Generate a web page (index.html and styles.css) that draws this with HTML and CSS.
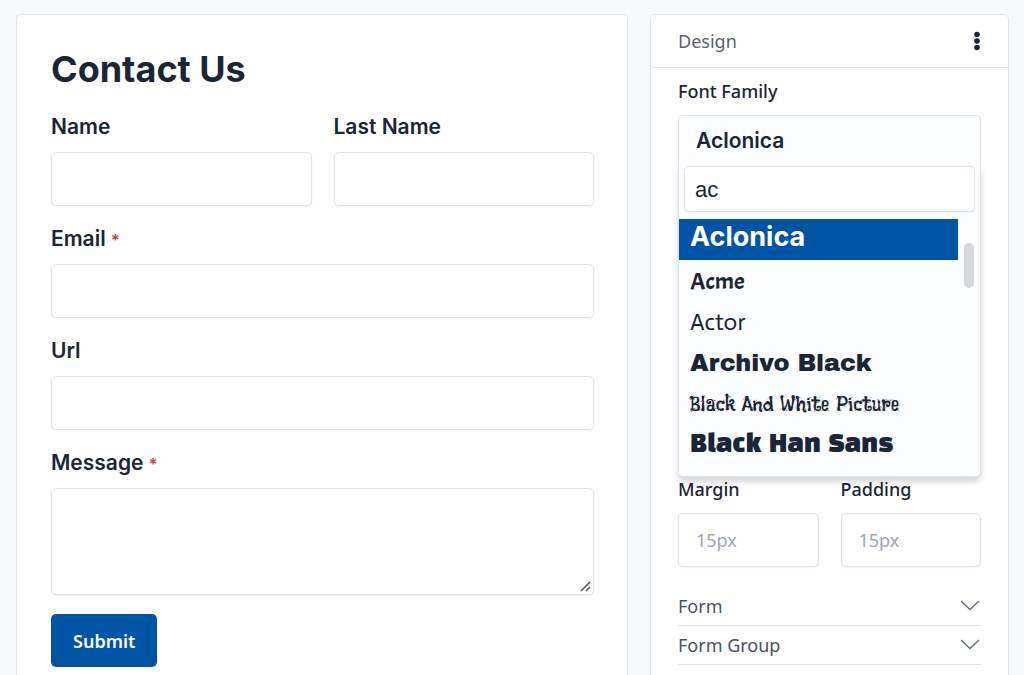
FILE: index.html
```
<!DOCTYPE html>
<html lang="en">
<head>
  <meta charset="UTF-8">
  <meta name="viewport" content="width=device-width, initial-scale=1.0">
  <title>Form Designer</title>
  <link rel="stylesheet" href="styles.css">
</head>

<body>

  <main class="layout">

    <!-- Form preview -->
    <form class="card preview">
      <h1 class="preview-title">Contact Us</h1>

      <div class="row">
        <div class="field">
          <label for="name">Name</label>
          <input type="text" id="name">
        </div>
        <div class="field">
          <label for="lastname">Last Name</label>
          <input type="text" id="lastname">
        </div>
      </div>

      <div class="field">
        <label for="email">Email <span class="required">*</span></label>
        <input type="email" id="email">
      </div>

      <div class="field">
        <label for="url">Url</label>
        <input type="url" id="url">
      </div>

      <div class="field">
        <label for="message">Message <span class="required">*</span></label>
        <textarea id="message"></textarea>
      </div>

      <button type="submit" class="submit">Submit</button>
    </form>

    <!-- Design panel -->
    <aside class="card panel">
      <header class="panel-header">
        <h2>Design</h2>
        <button type="button" class="menu" aria-label="Options">
          <svg width="8" height="20" viewBox="0 0 8 20" fill="#1a2536">
            <circle cx="4" cy="3.5" r="2.8"/>
            <circle cx="4" cy="10" r="2.8"/>
            <circle cx="4" cy="16.5" r="2.8"/>
          </svg>
        </button>
      </header>

      <div class="panel-body">
        <label for="font">Font Family</label>
        <div class="picker">
          <select id="font" class="picker-current">
            <option>Aclonica</option>
          </select>
          <div class="dropdown">
            <input type="text" class="search" value="ac" aria-label="Search fonts">
            <div class="fonts">
              <ul class="font-list">
                <li><button type="button" class="font aclonica selected">Aclonica</button></li>
                <li><button type="button" class="font acme">Acme</button></li>
                <li><button type="button" class="font actor">Actor</button></li>
                <li><button type="button" class="font archivo">Archivo Black</button></li>
                <li><button type="button" class="font picture">Black And White Picture</button></li>
                <li><button type="button" class="font han">Black Han Sans</button></li>
              </ul>
              <div class="scrollbar"></div>
            </div>
          </div>
        </div>

        <div class="row spacing">
          <div>
            <label for="margin">Margin</label>
            <input type="text" id="margin" placeholder="15px">
          </div>
          <div>
            <label for="padding">Padding</label>
            <input type="text" id="padding" placeholder="15px">
          </div>
        </div>

        <button type="button" class="section">
          Form
          <svg width="20" height="12" viewBox="0 0 20 12" fill="none" stroke="#5f6b7a" stroke-width="1.3"><path d="M0 1 9 9.5 18 1"/></svg>
        </button>
        <button type="button" class="section">
          Form Group
          <svg width="20" height="12" viewBox="0 0 20 12" fill="none" stroke="#5f6b7a" stroke-width="1.3"><path d="M0 1 9 9.5 18 1"/></svg>
        </button>
      </div>
    </aside>

  </main>

</body>
</html>
```
FILE: styles.css
```
* {
  box-sizing: border-box;
}
body {
  margin: 0;
  height: 100vh;
  overflow: hidden;
  background-color: #f6f8fc;
  font-family: "Segoe UI", "Noto Sans", sans-serif;
  font-size: 18px;
  color: #1a2536;
}
h1, h2, ul {
  margin: 0;
  padding: 0;
}
button, input, select, textarea {
  font: inherit;
  color: inherit;
}
button {
  border: 0;
  padding: 0;
  background: none;
  cursor: pointer;
}
label {
  display: block;
}
input, textarea {
  display: block;
  width: 100%;
  height: 54px;
  padding: 0 17px;
  border: 1px solid #dfe3e9;
  border-radius: 5px;
  background-color: white;
  box-shadow: 0 1px 2px rgba(0, 0, 0, 0.06);
}
input::placeholder {
  color: #9ca6b4;
}

.layout {
  display: grid;
  grid-template-columns: minmax(0, 1fr) 359px;
  gap: 22px;
  min-height: 100vh;
  padding: 14px 15px 0 16px;
}
.card {
  background-color: white;
  border: 1px solid #dfe3ea;
  border-radius: 5px;
}
.row {
  display: grid;
  grid-template-columns: 1fr 1fr;
  gap: 22px;
}

/* Form preview */
.preview {
  padding: 34px 33px 28px 34px;
}
.preview-title {
  margin-bottom: 24px;
  font-family: "Aclonica", "Inter", sans-serif;
  font-size: 36px;
  font-weight: 700;
  line-height: 40px;
}
.field {
  margin-bottom: 19px;
}
.field label {
  margin-bottom: 12px;
  font-family: "Aclonica", "Inter", sans-serif;
  font-size: 21px;
  font-weight: 600;
  line-height: 27px;
}
.field textarea {
  height: 107px;
  padding: 12px 17px;
  resize: vertical;
}
textarea::-webkit-resizer {
  background: url("data:image/svg+xml,%3Csvg xmlns='http://www.w3.org/2000/svg' width='15' height='15' stroke='%23555' stroke-width='1.6'%3E%3Cpath d='M3 12 12 3M8 12 12 8'/%3E%3C/svg%3E") no-repeat;
}
.required {
  color: #dc3545;
  font-size: 16px;
  line-height: 1;
}
.submit {
  height: 53px;
  padding: 0 22px;
  border-radius: 5px;
  background-color: #0054a6;
  color: white;
  font-weight: 600;
}

/* Design panel */
.panel-header {
  display: flex;
  justify-content: space-between;
  align-items: center;
  height: 53px;
  padding: 0 27px;
  border-bottom: 1px solid #dfe3ea;
}
.panel-header h2 {
  font-size: 18px;
  font-weight: 400;
  color: #566171;
}
.menu {
  display: flex;
}
.panel-body {
  padding: 11px 27px;
}
.panel-body label {
  margin-bottom: 12px;
  font-weight: 500;
  line-height: 24px;
}
.picker-current {
  appearance: none;
  display: block;
  width: 100%;
  height: 51px;
  padding: 0 17px 2px;
  border: 1px solid #dfe3e9;
  border-bottom: 0;
  border-radius: 5px 5px 0 0;
  background-color: #fcfdff;
  font-family: "Aclonica", "Inter", sans-serif;
  font-size: 21px;
  font-weight: 600;
}
.dropdown {
  height: 311px;
  border: 1px solid #dfe3e9;
  border-top: 0;
  border-radius: 0 0 5px 5px;
  background-color: #fcfdff;
  box-shadow: 0 5px 6px rgba(0, 0, 0, 0.16);
}
.dropdown .search {
  width: calc(100% - 10px);
  height: 46px;
  margin: 0 5px 7px;
  padding: 2px 10px 0;
  font-family: "Liberation Sans", sans-serif;
  font-size: 22px;
}
.fonts {
  display: flex;
  gap: 6px;
}
.font-list {
  flex: 1;
  list-style: none;
}
.font {
  display: block;
  width: 100%;
  height: 41px;
  padding: 0 11px;
  text-align: left;
  white-space: nowrap;
  font-size: 24px;
  line-height: 40px;
}
.aclonica {
  font-family: "Aclonica", "Inter", sans-serif;
  font-size: 27px;
  font-weight: 700;
}
.font.selected {
  padding-bottom: 6px;
  background-color: #0054a6;
  color: white;
  line-height: 34px;
}
.acme {
  font-family: "Acme", "Open Sans", sans-serif;
}
.actor {
  font-family: "Actor", "Open Sans", sans-serif;
}
.archivo {
  font-family: "Archivo Black", "Inter", sans-serif;
}
.picture {
  font-family: "Black And White Picture", "Open Sans", sans-serif;
}
.han {
  font-family: "Black Han Sans", "Inter", sans-serif;
}
.scrollbar {
  width: 10px;
  height: 45px;
  margin: 24px 6px 0 0;
  border-radius: 5px;
  background-color: #d6d8db;
}
.spacing {
  margin-bottom: 20px;
}
.section {
  display: flex;
  justify-content: space-between;
  align-items: center;
  width: 100%;
  height: 39px;
  border-bottom: 1px solid #dfe3ea;
  color: #465263;
}
```
